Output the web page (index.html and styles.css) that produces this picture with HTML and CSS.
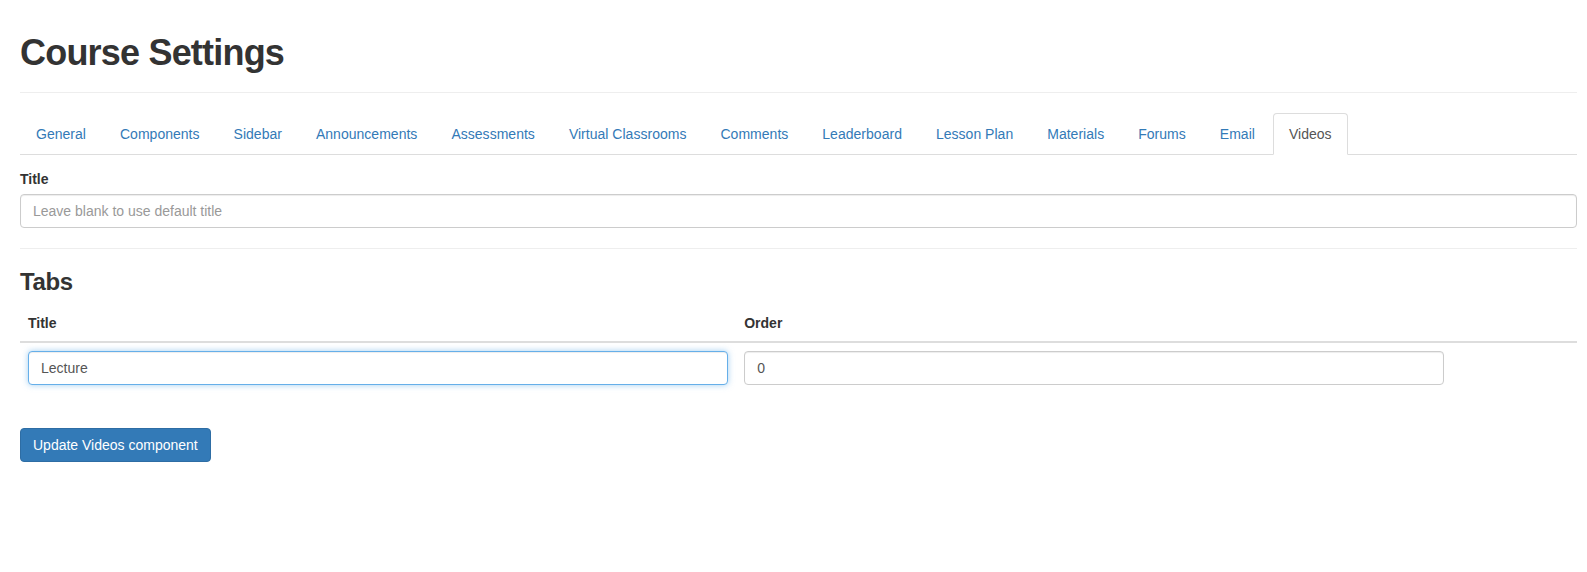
FILE: index.html
```html
<!DOCTYPE html>
<html lang="en">
<head>
<meta charset="utf-8">
<title>Course Settings</title>
<link rel="stylesheet" href="styles.css">
</head>
<body>
<div class="page">
  <div class="page-header">
    <h1>Course Settings</h1>
  </div>
  <ul class="nav-tabs">
    <li><a href="#">General</a></li>
    <li><a href="#">Components</a></li>
    <li><a href="#">Sidebar</a></li>
    <li><a href="#">Announcements</a></li>
    <li><a href="#">Assessments</a></li>
    <li><a href="#">Virtual Classrooms</a></li>
    <li><a href="#">Comments</a></li>
    <li><a href="#">Leaderboard</a></li>
    <li><a href="#">Lesson Plan</a></li>
    <li><a href="#">Materials</a></li>
    <li><a href="#">Forums</a></li>
    <li><a href="#">Email</a></li>
    <li class="active"><a href="#">Videos</a></li>
  </ul>
  <form class="settings-form">
    <div class="form-group">
      <label class="control-label" for="title">Title</label>
      <input class="form-control" id="title" type="text" placeholder="Leave blank to use default title">
    </div>
    <hr class="divider">
    <h3 class="section-title">Tabs</h3>
    <table class="table">
      <colgroup>
        <col class="col-title">
        <col class="col-order">
        <col class="col-rest">
      </colgroup>
      <thead>
        <tr><th>Title</th><th>Order</th><th></th></tr>
      </thead>
      <tbody>
        <tr>
          <td><input class="form-control focused" type="text" value="Lecture"></td>
          <td><input class="form-control" type="text" value="0"></td>
          <td></td>
        </tr>
      </tbody>
    </table>
    <button type="button" class="btn btn-primary">Update Videos component</button>
  </form>
</div>
</body>
</html>
```
FILE: styles.css
```css
* { box-sizing: border-box; }
html, body { margin: 0; padding: 0; background: #fff; }
body {
  font-family: "Liberation Sans", Arial, Helvetica, sans-serif;
  font-size: 14px;
  line-height: 20px;
  color: #333;
}
.page { padding: 0 10px 20px 20px; }

.page-header {
  margin: 33px 0 20px;
  padding-bottom: 9px;
  border-bottom: 1px solid #eee;
}
.page-header h1 {
  margin: 0 0 10px;
  font-size: 36px;
  line-height: 39.6px;
  font-weight: bold;
  letter-spacing: -0.8px;
  color: #333;
}

.nav-tabs {
  display: flex;
  list-style: none;
  margin: 0;
  padding: 0;
  border-bottom: 1px solid #ddd;
}
.nav-tabs li { margin-bottom: -1px; }
.nav-tabs a {
  display: block;
  padding: 10px 15px;
  margin-right: 2px;
  line-height: 20px;
  letter-spacing: 0.02px;
  color: #337ab7;
  text-decoration: none;
  border: 1px solid transparent;
  border-radius: 4px 4px 0 0;
}
.nav-tabs .active a {
  color: #555;
  background: #fff;
  border-color: #ddd #ddd transparent;
}

.settings-form { padding-top: 14px; }
.form-group { margin-bottom: 0; }
.control-label {
  display: block;
  font-weight: bold;
  margin-bottom: 5px;
}
.form-control {
  display: block;
  width: 100%;
  height: 34px;
  padding: 6px 12px;
  font-family: inherit;
  font-size: 14px;
  line-height: 20px;
  color: #555;
  background: #fff;
  border: 1px solid #ccc;
  border-radius: 4px;
  box-shadow: inset 0 1px 1px rgba(0,0,0,.075);
}
.form-control::placeholder { color: #999; }
.form-control.focused {
  border-color: #66afe9;
  outline: 0;
  box-shadow: inset 0 1px 1px rgba(0,0,0,.075), 0 0 6px rgba(102,175,233,.6);
}

.divider {
  margin: 20px 0;
  border: 0;
  border-top: 1px solid #eee;
}
.section-title {
  margin: 20px 0 10px;
  font-size: 24px;
  line-height: 26.4px;
  font-weight: bold;
  letter-spacing: -0.4px;
}

.table {
  width: 100%;
  border-collapse: collapse;
  border-spacing: 0;
  margin-bottom: 35px;
}
.col-title, .col-order { width: 46%; }
.col-rest { width: 8%; }
.table th {
  text-align: left;
  font-weight: bold;
  padding: 8px;
  line-height: 20px;
  border-bottom: 2px solid #ddd;
  vertical-align: bottom;
}
.table td {
  padding: 8px;
  vertical-align: top;
}

.btn {
  display: inline-block;
  padding: 6px 12px;
  font-family: inherit;
  font-size: 14px;
  line-height: 20px;
  border-radius: 4px;
  border: 1px solid transparent;
  cursor: pointer;
}
.btn-primary {
  color: #fff;
  background: #337ab7;
  border-color: #2e6da4;
}
```
